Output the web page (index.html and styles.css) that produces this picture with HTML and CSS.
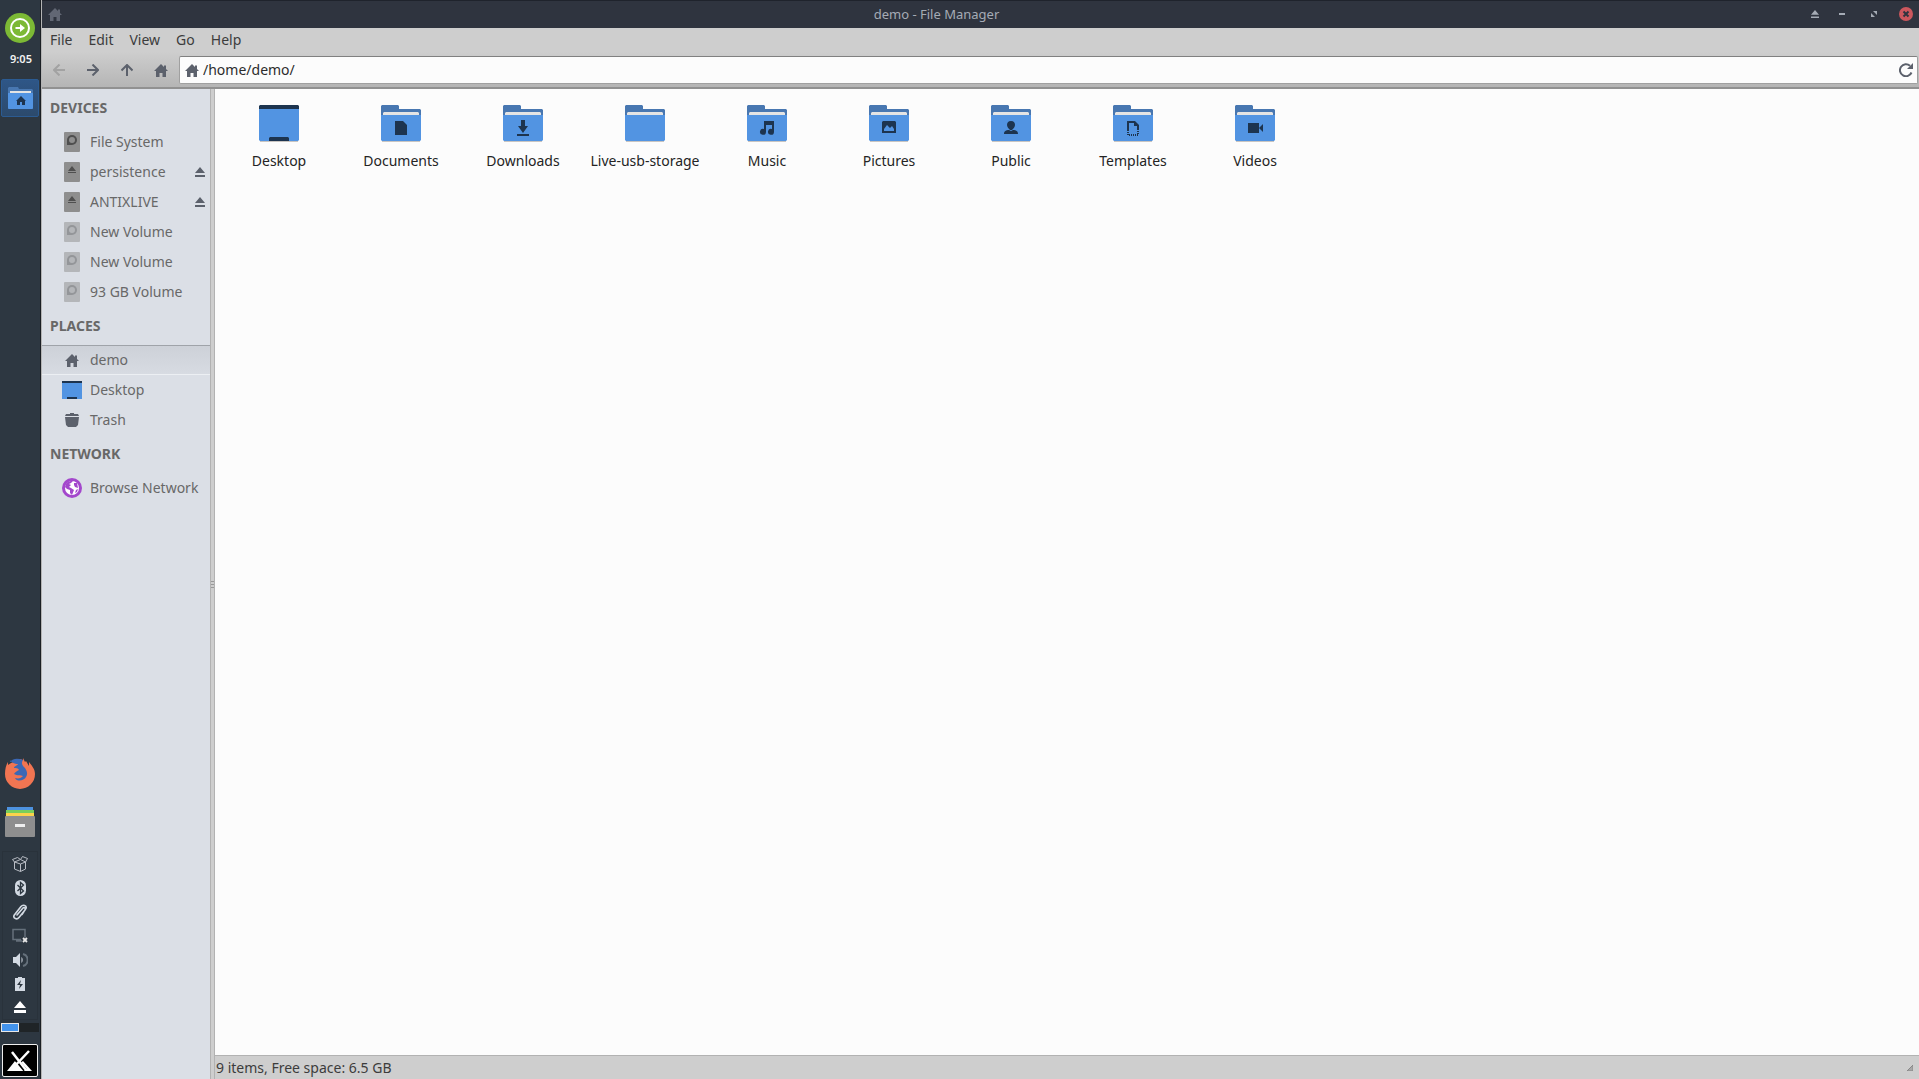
FILE: index.html
```html
<!DOCTYPE html>
<html lang="en">
<head>
<meta charset="utf-8">
<title>demo - File Manager</title>
<link rel="stylesheet" href="styles.css">
</head>
<body>
<svg class="defs" aria-hidden="true">
  <symbol id="home" viewBox="0 0 14 13"><path d="M7 0 0 7h2v6h3.500V9h3v4H12V7h2l-2-2V1.500h-2V3z"/></symbol>
  <symbol id="eject" viewBox="0 0 10 10"><path d="M5 0 0 6h10zM0 8h10v2H0z"/></symbol>
  <symbol id="folder" viewBox="0 0 40 38">
    <path d="M1 36h38v1H1z" fill="#c9c5c1"/>
    <path d="M1 0h16l1 1v3h21l1 1v10H0V1z" fill="#4877b1"/>
    <path d="M3 7h34l1 1v3H2V8z" fill="#e4e4e4"/>
    <path d="M0 10h40v25l-1 1H1l-1-1z" fill="#5294e2"/>
  </symbol>
  <symbol id="desktop" viewBox="0 0 40 38">
    <path d="M1 36h38v1H1z" fill="#c9c5c1"/>
    <path d="M0 3h40v32l-1 1H1l-1-1z" fill="#5294e2"/>
    <path d="M1 0h38l1 1v3H0V1zM11 32h18l1 1v3H10v-3z" fill="#1d344f"/>
  </symbol>
  <symbol id="disk" viewBox="0 0 16 20">
    <rect width="16" height="20" rx="1" fill="#8e8e8e"/>
    <path d="M3 13V8a5 5 0 1 1 5 5z" fill="#4f4f4f"/><circle cx="8" cy="8" r="3" fill="#8e8e8e"/>
  </symbol>
  <symbol id="removable" viewBox="0 0 16 20">
    <rect width="16" height="20" rx="1" fill="#8e8e8e"/>
    <path d="M8 4 4 9h8zM4 10h8v1H4z" fill="#4f4f4f"/>
  </symbol>
</svg>

<div class="screen">
  <aside class="panel" aria-label="Panel">
    <button class="launcher start" aria-label="Applications">
      <svg width="30" height="30" viewBox="0 0 30 30"><circle cx="15" cy="15" r="15" fill="#7cb935"/><circle cx="15" cy="15" r="9" fill="none" stroke="#fff" stroke-width="2"/><path d="M10.500 14v2H15v3l5-4-5-4v3z" fill="#fff"/></svg>
    </button>
    <time class="clock">9:05</time>
    <button class="task" aria-label="demo - File Manager">
      <svg width="25" height="23" viewBox="0 0 25 23"><path d="M1 0h9l1 2h13l1 1v19H0V1z" fill="#4877b1"/><path d="M2 4h21v3H2z" fill="#e4e4e4"/><path d="M0 6h25v15l-1 1H1l-1-1z" fill="#5294e2"/><path d="m13 9-5 5h1v4h3v-3h2v3h3v-4h1z" fill="#1d344f"/></svg>
    </button>
    <div class="spacer"></div>
    <button class="launcher firefox" aria-label="Firefox">
      <svg width="30" height="32" viewBox="0 0 30 32"><path d="M3 5v3l3-2 9-4 3 1V1l2 4 1-1 3 5V5c3 4 6 7 6 12a15 15 0 0 1-30 0C0 12 1 8 3 5z" fill="#f17552"/><path d="M5 5c3-4 8-4 13-2-2 3-1 5 2 8 2 3 3 6 1 9-2 4-9 5-11 1 4 1 6 0 8-2-2-1-6 0-9-2 1-2 3-3 5-4-1-2-3-2-5-2 0-2 3-2 4-4-3 0-6-1-8-4z" fill="#3b68b5"/></svg>
    </button>
    <button class="launcher files" aria-label="Files">
      <svg width="30" height="30" viewBox="0 0 30 30"><path d="M2 0h26v3H2z" fill="#4d92df"/><path d="M1 3h28v3H1z" fill="#79cf5c"/><path d="M1 6h28v4H1z" fill="#fcd34b"/><rect y="9" width="30" height="21" rx="1" fill="#8e8e8e"/><path d="M10 17h10v3H10z" fill="#eee"/></svg>
    </button>
    <div class="tray">
      <svg viewBox="0 0 16 16" fill="none" stroke="#b8bcc4"><path fill="none" d="M2.500 6v7l6 2.500 5-2.500V6M2.500 6l6 2v7.500M8.500 8l5-2M.5 3.500l5-2 3 2-6 2.500zM8.500 3.500l2-3 5 2-2 3.500z"/></svg>
      <svg viewBox="0 0 16 16"><rect x="3" width="11" height="16" rx="5.500" fill="#d3dae3"/><path d="m5.500 5 6 6-3 2.500v-11l3 2.500-6 6" fill="none" stroke="#2d3741" stroke-width="1.300"/></svg>
      <svg viewBox="0 0 16 16"><path d="m5 11 6-7c1-1 3 0 2 2l-6 7.500c-2 2.500-6 1-5-2l7-9c2-2.500 6-1 5 2l-4 6" fill="none" stroke="#d3dae3" stroke-width="1.600" stroke-linecap="round"/></svg>
      <svg viewBox="0 0 16 16"><path d="M9 11.500H1v-10h12v8M4 13h6" fill="none" stroke="#65707b" stroke-width="1.500"/><path d="m11 10 4 4m0-4-4 4" stroke="#e8e8e8" stroke-width="1.800"/></svg>
      <svg viewBox="0 0 16 16"><path d="M1 5h3l4-4v14l-4-4H1zM9.500 5c1.500 1 1.500 5 0 6z" fill="#d3dae3"/><path d="M11 2a6.200 6.200 0 0 1 0 12" fill="none" stroke="#65707b" stroke-width="2"/></svg>
      <svg viewBox="0 0 16 16"><path d="M6 1h4v1h3v13H3V2h3z" fill="#d3dae3"/><path d="M9 4 5 9h3l-1 4 4-5H8z" fill="#2d3741"/></svg>
      <svg viewBox="0 0 16 16"><path d="M8 1 2 8h12zM2 10h12v3H2z" fill="#fff"/></svg>
    </div>
    <div class="pager"><span class="workspace current"></span><span class="workspace"></span></div>
    <button class="menu" aria-label="Menu">
      <svg width="32" height="30" viewBox="0 0 32 30"><path d="m3 25 8-10 4 3 4-3 9 10z" fill="#fff"/><path d="m7 7 14 17" stroke="#000" stroke-width="4"/><path d="M25 5 9 22M8 6l14 18" stroke="#fff" stroke-width="2.500"/></svg>
    </button>
  </aside>

  <main class="window">
    <header class="titlebar">
      <svg class="app-icon" width="14" height="13"><use href="#home"/></svg>
      <h1>demo - File Manager</h1>
      <div class="controls">
        <button class="narrow" aria-label="Shade"><svg width="8" height="8"><use href="#eject"/></svg></button>
        <button aria-label="Minimize"><svg width="6" height="2"><path d="M0 0h6v2H0z"/></svg></button>
        <button aria-label="Restore"><svg width="6" height="6"><path d="M2 0h4v4zM0 2v4h4z"/></svg></button>
        <button aria-label="Close"><svg width="14" height="14"><circle cx="7" cy="7" r="7" fill="#cc575d"/><path d="m4.500 4.500 5 5m0-5-5 5" stroke="#2f343f" stroke-width="2"/></svg></button>
      </div>
    </header>
    <div class="chrome">
      <nav class="menubar" aria-label="Menu bar">
        <button>File</button><button>Edit</button><button>View</button><button>Go</button><button>Help</button>
      </nav>
      <div class="toolbar">
        <button aria-label="Back" disabled><svg width="12" height="12"><path d="M6.500.5 1 6l5.500 5.500M1 6h11" fill="none" stroke="currentColor" stroke-width="2"/></svg></button>
        <button aria-label="Forward"><svg width="12" height="12"><path d="M5.500.5 11 6l-5.500 5.500M11 6H0" fill="none" stroke="currentColor" stroke-width="2"/></svg></button>
        <button aria-label="Up"><svg width="12" height="12"><path d="M.5 6.500 6 1l5.500 5.500M6 1v11" fill="none" stroke="currentColor" stroke-width="2"/></svg></button>
        <button aria-label="Home"><svg width="14" height="13"><use href="#home"/></svg></button>
        <div class="location">
          <svg width="14" height="13"><use href="#home"/></svg>
          <input type="text" aria-label="Location" value="/home/demo/">
          <button aria-label="Reload"><svg width="14" height="14"><path d="M12.500 9.500A6 6 0 1 1 11 2.800" fill="none" stroke="currentColor" stroke-width="2"/><path d="M14 0v6H8z"/></svg></button>
        </div>
      </div>
    </div>

    <div class="body">
      <nav class="sidebar" aria-label="Places">
        <h2>DEVICES</h2>
        <ul>
          <li><a href="#fs"><svg width="16" height="20"><use href="#disk"/></svg>File System</a></li>
          <li><a href="#persistence"><svg width="16" height="20"><use href="#removable"/></svg>persistence</a><button aria-label="Eject persistence"><svg width="10" height="10"><use href="#eject"/></svg></button></li>
          <li><a href="#antix"><svg width="16" height="20"><use href="#removable"/></svg>ANTIXLIVE</a><button aria-label="Eject ANTIXLIVE"><svg width="10" height="10"><use href="#eject"/></svg></button></li>
          <li class="unmounted"><a href="#vol1"><svg width="16" height="20"><use href="#disk"/></svg>New Volume</a></li>
          <li class="unmounted"><a href="#vol2"><svg width="16" height="20"><use href="#disk"/></svg>New Volume</a></li>
          <li class="unmounted"><a href="#vol3"><svg width="16" height="20"><use href="#disk"/></svg>93 GB Volume</a></li>
        </ul>
        <h2>PLACES</h2>
        <ul>
          <li class="selected"><a href="#demo"><svg width="14" height="13"><use href="#home"/></svg>demo</a></li>
          <li><a href="#desktop-place"><svg width="20" height="18" viewBox="0 0 20 18"><path d="M0 1h20v17H0z" fill="#5294e2"/><path d="M0 0h20v2H0zM5 16h10v2H5z" fill="#1d344f"/></svg>Desktop</a></li>
          <li><a href="#trash"><svg width="14" height="14" viewBox="0 0 14 14"><path d="M1 1h4V0h4v1h4l1 2H0zM0 4h14l-1 8-2 2H3l-2-2z"/></svg>Trash</a></li>
        </ul>
        <h2>NETWORK</h2>
        <ul>
          <li><a href="#network"><svg width="20" height="20"><circle cx="10" cy="10" r="10" fill="#a347cc"/><circle cx="10" cy="10" r="7" fill="#fff"/><path d="M4 6c2-3 4-3 7-3L9 5 7 6l2 1-2 2 2 1 3 2-2 5-2-2v-3l-3-1-2-2zM12 5l3 0 1 5-3-1-1-2zM14 12l2-1-1 3-2 1z" fill="#a347cc"/></svg>Browse Network</a></li>
        </ul>
      </nav>
      <div class="splitter" role="separator"><i></i><i></i><i></i></div>
      <section class="files-pane">
        <div class="grid">
          <a href="#f1"><svg width="40" height="38"><use href="#desktop"/></svg>Desktop</a>
          <a href="#f2"><svg width="40" height="38"><use href="#folder"/><path class="emblem" d="M14 16h8l4 4v10H14z"/></svg>Documents</a>
          <a href="#f3"><svg width="40" height="38"><use href="#folder"/><path class="emblem" d="M18 15h4v6h3l-5 7-5-7h3zM14 29h12v2H14z"/></svg>Downloads</a>
          <a href="#f4"><svg width="40" height="38"><use href="#folder"/></svg>Live-usb-storage</a>
          <a href="#f5"><svg width="40" height="38"><use href="#folder"/><path class="emblem" d="M17 16h10v11a3 3 0 1 1-2-3v-4h-6v7a3 3 0 1 1-2-3z"/></svg>Music</a>
          <a href="#f6"><svg width="40" height="38"><use href="#folder"/><path class="emblem" fill-rule="evenodd" d="M13 17l1-1h12l1 1v11H13zM15 26h10v-2l-2-3-2 2-3-3-3 4z"/></svg>Pictures</a>
          <a href="#f7"><svg width="40" height="38"><use href="#folder"/><path class="emblem" d="M20 16c3 0 4 2 4 4s-2 4-3 5h-2c-1-1-3-3-3-5s1-4 4-4zM13 29c0-3 2-4 5-4l2 1 2-1c3 0 5 1 5 4z"/></svg>Public</a>
          <a href="#f8"><svg width="40" height="38"><use href="#folder"/><path class="emblem" d="M14 16h8l4 4v5h-2v-4h-3v-3h-5v7h-2z"/><path d="M15 25v5h10v-5" fill="none" stroke="#1d344f" stroke-width="2" stroke-dasharray="1 1"/></svg>Templates</a>
          <a href="#f9"><svg width="40" height="38"><use href="#folder"/><path class="emblem" d="M13 18h11v10H13zM24 23l4-4v8z"/></svg>Videos</a>
        </div>
      </section>
      <footer class="status"><span>9 items, Free space: 6.5 GB</span><svg width="6" height="6"><path d="M6 0v6H0z" fill="#a8a8a8" stroke="#888"/></svg></footer>
    </div>
  </main>
</div>
</body>
</html>
```
FILE: styles.css
```css
* { box-sizing: border-box; }
body { margin: 0; font: 14px/20px "Noto Sans", sans-serif; color: #3c3c3c; }
button { margin: 0; padding: 0; border: 0; background: none; color: inherit; font: inherit; display: flex; align-items: center; justify-content: center; }
a { color: inherit; text-decoration: none; }
h1, h2, ul { margin: 0; padding: 0; list-style: none; }
svg { display: block; flex: none; fill: currentColor; }
.defs { position: absolute; width: 0; height: 0; }
.screen { display: flex; min-height: 100vh; }

/* Vertical desktop panel */
.panel { width: 42px; flex: none; display: flex; flex-direction: column; align-items: center; background: #2d3741; border-right: 1px solid #b4b4b4; box-shadow: inset -1px 0 #1b1f24; padding: 13px 1px 2px 0; }
.clock { margin: 6px 0 10px; padding-left: 2px; font-size: 11px; font-weight: 600; color: #f2f2f2; }
.task { width: 38px; height: 38px; border: 1px solid #2b5b92; border-radius: 2px; background: linear-gradient(#2e5687, #2c4a6c); }
.spacer { flex: 1; }
.files { margin: 18px 0 14px; }
.tray { width: 36px; border: 1px solid #29323b; padding: 4px 0 3px; display: flex; flex-direction: column; align-items: center; gap: 8px; }
.tray svg { width: 16px; height: 16px; }
.pager { display: flex; width: 38px; height: 9px; margin: 3px 0 12px; background: #1f2427; }
.workspace { flex: 1; }
.current { flex: 0 0 18px; background: #4394ed; border: 1px solid #e8e8e8; }
.menu { width: 36px; height: 33px; background: #000; border: 1px solid #eee; border-radius: 2px; }

/* Window frame */
.window { flex: 1; min-width: 0; display: flex; flex-direction: column; background: #cecece; }
.titlebar { display: flex; align-items: center; height: 28px; padding: 0 0 1px 6px; background: #2f343f; border-top: 1px solid #1f232c; color: #626774; }
.titlebar h1 { flex: 1; padding-left: 4px; text-align: center; font-size: 13px; font-weight: 400; color: #a5abb5; }
.controls { display: flex; gap: 6px; color: #a5abb5; }
.controls button { width: 26px; height: 26px; }
.controls .narrow { width: 16px; }
.chrome { background: linear-gradient(#cecece 40%, #b5b5b5); border-bottom: 2px solid #919191; }
.menubar { display: flex; height: 27px; }
.menubar button { padding: 0 8px; height: 24px; }
.toolbar { display: flex; height: 32px; padding: 1px 1px 3px 0; color: #5c616c; }
.toolbar > button { width: 34px; }
.toolbar button:disabled { color: #a2a2a2; }
.location { flex: 1; display: flex; align-items: center; margin-left: 1px; padding: 0 4px 0 5px; background: #fcfcfc; border: 1px solid #a0a0a0; border-top-color: #808080; border-radius: 2px; }
.location input { flex: 1; min-width: 0; border: 0; outline: 0; padding: 0 4px; background: none; font: inherit; color: #2c2c2c; }

/* Side pane, splitter, icon view */
.body { flex: 1; display: grid; grid-template: 1fr 23px / 168px 5px 1fr; }
.sidebar { grid-row: 1 / 3; background: #dbdfe6; color: #686868; }
.sidebar h2 { height: 38px; padding-left: 8px; font-size: 14px; line-height: 38px; font-weight: 700; }
.sidebar li { display: flex; align-items: center; height: 30px; }
.sidebar a { flex: 1; display: flex; align-items: center; white-space: nowrap; }
.sidebar a svg { width: 20px; margin: 0 8px 0 20px; color: #5c616c; }
.sidebar li button { width: 20px; height: 20px; color: #5c616c; }
.unmounted svg { opacity: .5; }
.selected { background: linear-gradient(#cdd1d8, #d7dbe2); border-top: 1px solid #9fa3a9; border-bottom: 1px solid #eceff3; }
.splitter { grid-row: 1 / 3; display: flex; flex-direction: column; align-items: center; justify-content: center; gap: 2px; border: solid #b2b2b2; border-width: 0 1px; background: #cecece; }
.splitter i { width: 3px; height: 1px; background: #999; }
.files-pane { background: #fcfcfc; border-bottom: 1px solid #b2b2b2; }
.grid { display: grid; grid-template-columns: repeat(auto-fill, 122px); padding: 16px 3px; row-gap: 16px; color: #242424; }
.grid a { display: flex; flex-direction: column; align-items: center; gap: 8px; }
.emblem { fill: #1d344f; }
.status { display: flex; align-items: center; justify-content: space-between; padding: 0 6px 0 1px; }
```
